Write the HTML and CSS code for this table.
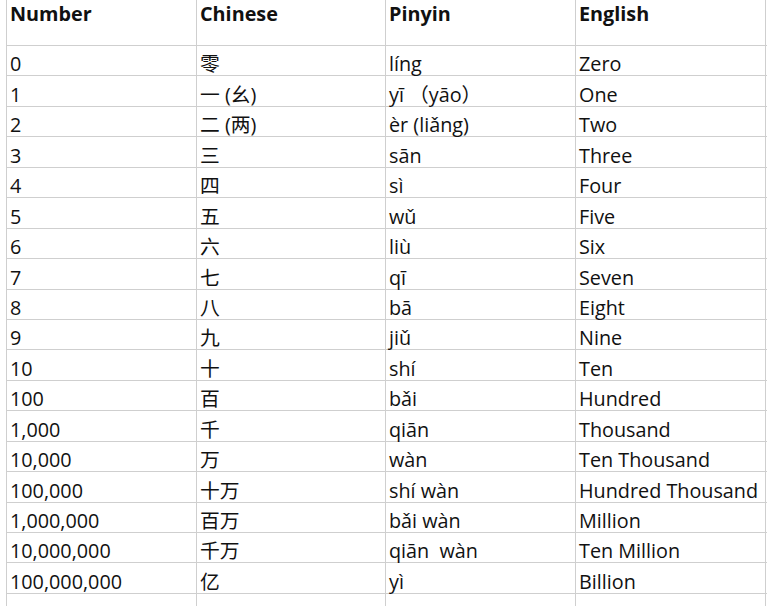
FILE: index.html
```html
<!DOCTYPE html>
<html lang="en">
<head>
<meta charset="utf-8">
<title>Chinese Numbers</title>
<link rel="stylesheet" href="styles.css">
</head>
<body>
<div class="sheet">
  <div class="row head">
    <div class="cell">Number</div><div class="cell">Chinese</div><div class="cell">Pinyin</div><div class="cell">English</div>
  </div>
  <div class="row"><div class="cell">0</div><div class="cell">零</div><div class="cell">líng</div><div class="cell">Zero</div></div>
  <div class="row"><div class="cell">1</div><div class="cell">一 (幺)</div><div class="cell">yī （yāo）</div><div class="cell">One</div></div>
  <div class="row"><div class="cell">2</div><div class="cell">二 (两)</div><div class="cell">èr (liǎng)</div><div class="cell">Two</div></div>
  <div class="row"><div class="cell">3</div><div class="cell">三</div><div class="cell">sān</div><div class="cell">Three</div></div>
  <div class="row"><div class="cell">4</div><div class="cell">四</div><div class="cell">sì</div><div class="cell">Four</div></div>
  <div class="row"><div class="cell">5</div><div class="cell">五</div><div class="cell">wǔ</div><div class="cell">Five</div></div>
  <div class="row"><div class="cell">6</div><div class="cell">六</div><div class="cell">liù</div><div class="cell">Six</div></div>
  <div class="row"><div class="cell">7</div><div class="cell">七</div><div class="cell">qī</div><div class="cell">Seven</div></div>
  <div class="row"><div class="cell">8</div><div class="cell">八</div><div class="cell">bā</div><div class="cell">Eight</div></div>
  <div class="row"><div class="cell">9</div><div class="cell">九</div><div class="cell">jiǔ</div><div class="cell">Nine</div></div>
  <div class="row"><div class="cell">10</div><div class="cell">十</div><div class="cell">shí</div><div class="cell">Ten</div></div>
  <div class="row"><div class="cell">100</div><div class="cell">百</div><div class="cell">bǎi</div><div class="cell">Hundred</div></div>
  <div class="row"><div class="cell">1,000</div><div class="cell">千</div><div class="cell">qiān</div><div class="cell">Thousand</div></div>
  <div class="row"><div class="cell">10,000</div><div class="cell">万</div><div class="cell">wàn</div><div class="cell">Ten Thousand</div></div>
  <div class="row"><div class="cell">100,000</div><div class="cell">十万</div><div class="cell">shí wàn</div><div class="cell">Hundred Thousand</div></div>
  <div class="row"><div class="cell">1,000,000</div><div class="cell">百万</div><div class="cell">bǎi wàn</div><div class="cell">Million</div></div>
  <div class="row"><div class="cell">10,000,000</div><div class="cell">千万</div><div class="cell">qiān  wàn</div><div class="cell">Ten Million</div></div>
  <div class="row"><div class="cell">100,000,000</div><div class="cell">亿</div><div class="cell">yì</div><div class="cell">Billion</div></div>
  <div class="row"><div class="cell"></div><div class="cell"></div><div class="cell"></div><div class="cell"></div></div>
</div>
</body>
</html>
```

FILE: styles.css
```css
html, body {
  margin: 0;
  padding: 0;
  background: #ffffff;
  overflow: hidden;
}

.sheet {
  margin-left: 6px;
  width: 760px;
  border-left: 1px solid #cfcfcf;
  font-family: "Open Sans", "Noto Sans CJK SC", sans-serif;
  font-size: 19.8px;
  color: #111111;
}

.row {
  display: grid;
  grid-template-columns: 190px 189px 190px 190px;
  height: 30.44px;
  box-sizing: border-box;
  border-bottom: 1px solid #cfcfcf;
}

.row.head {
  height: 46px;
  font-weight: 700;
}

.cell {
  box-sizing: border-box;
  border-right: 1px solid #cfcfcf;
  padding: 0 0 0 3px;
  display: flex;
  align-items: flex-end;
  white-space: pre;
  line-height: 22px;
}

.row.head .cell {
  align-items: flex-start;
  line-height: 27px;
  padding-top: 0;
}
```
